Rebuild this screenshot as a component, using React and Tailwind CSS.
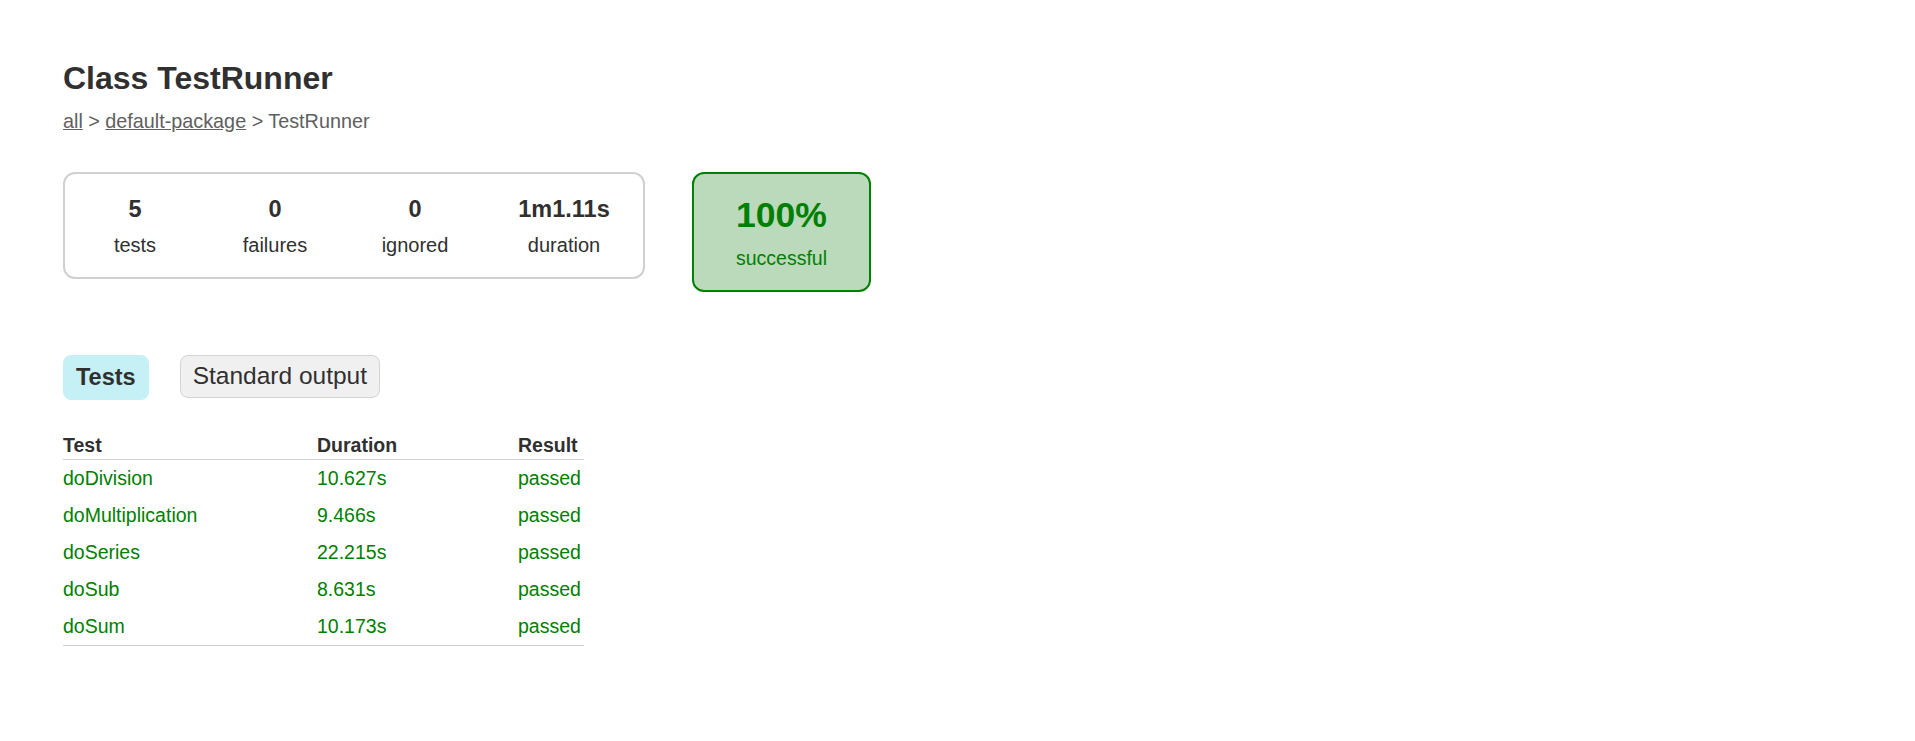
import React from "react";

const tests = [
  { name: "doDivision", duration: "10.627s", result: "passed" },
  { name: "doMultiplication", duration: "9.466s", result: "passed" },
  { name: "doSeries", duration: "22.215s", result: "passed" },
  { name: "doSub", duration: "8.631s", result: "passed" },
  { name: "doSum", duration: "10.173s", result: "passed" },
];

const counters = [
  { value: "5", label: "tests", width: "w-[140px]" },
  { value: "0", label: "failures", width: "w-[140px]" },
  { value: "0", label: "ignored", width: "w-[140px]" },
  { value: "1m1.11s", label: "duration", width: "w-[158px]" },
];

const InfoBox = ({ value, label, width }) => (
  <div className={`${width} pt-[22px] pb-[21px] text-center`}>
    <div className="text-[23.5px] leading-[26px] font-bold">{value}</div>
    <div className="mt-[12px] text-[20px] leading-[22px]">{label}</div>
  </div>
);

export default function App() {
  return (
    <div className="min-h-screen bg-white pl-[63px] pr-[60px] pt-[60px] font-['Liberation_Sans',Arial,sans-serif] text-[#303030]">
      <h1 className="text-[32px] leading-[37px] font-bold whitespace-nowrap">Class TestRunner</h1>
      <div className="mt-[13px] text-[19.8px] leading-[22px] text-[#606060]">
        <a href="#" className="underline text-[#606060]">all</a> &gt;{" "}
        <a href="#" className="underline text-[#606060]">default-package</a> &gt; TestRunner
      </div>

      {/* summary */}
      <div className="mt-[40px] flex items-start">
        <div className="flex border-2 border-[#d0d0d0] rounded-[12px]">
          {counters.map((c) => (
            <InfoBox key={c.label} {...c} />
          ))}
        </div>
        <div className="ml-[47px] w-[179px] pt-[21px] pb-[21px] text-center border-2 border-[#008000] bg-[#bbd9bb] rounded-[12px] text-[#008000]">
          <div className="text-[35.5px] leading-[40px] font-bold">100%</div>
          <div className="mt-[12px] text-[19.5px] leading-[22px]">successful</div>
        </div>
      </div>

      {/* tabs */}
      <ul className="mt-[63px] flex items-start gap-[31px]">
        <li className="h-[45px] flex items-center px-3 rounded-[8px] border border-[#c5f0f5] bg-[#c5f0f5]">
          <a href="#" className="text-[23.5px] font-bold">Tests</a>
        </li>
        <li className="h-[43px] flex items-center px-3 rounded-[8px] border border-[#d4d4d4] bg-[#f0f0f0]">
          <a href="#" className="text-[24.5px]">Standard output</a>
        </li>
      </ul>

      {/* tests table */}
      <table className="mt-[32px] table-fixed w-[521px] border-collapse border-b border-[#d0d0d0]">
        <thead>
          <tr>
            <th className="w-[254px] py-px text-left font-bold text-[19.5px] leading-[25px] border-b border-[#d0d0d0]">Test</th>
            <th className="w-[201px] py-px text-left font-bold text-[19.5px] leading-[25px] border-b border-[#d0d0d0]">Duration</th>
            <th className="w-[66px] py-px text-left font-bold text-[19.5px] leading-[25px] border-b border-[#d0d0d0]">Result</th>
          </tr>
        </thead>
        <tbody>
          {tests.map((t) => (
            <tr key={t.name} className="text-[#008000] text-[19.5px] leading-[27px]">
              <td className="py-[5px] whitespace-nowrap">
                <a href="#">{t.name}</a>
              </td>
              <td className="py-[5px] whitespace-nowrap">{t.duration}</td>
              <td className="py-[5px] whitespace-nowrap">{t.result}</td>
            </tr>
          ))}
        </tbody>
      </table>
    </div>
  );
}
